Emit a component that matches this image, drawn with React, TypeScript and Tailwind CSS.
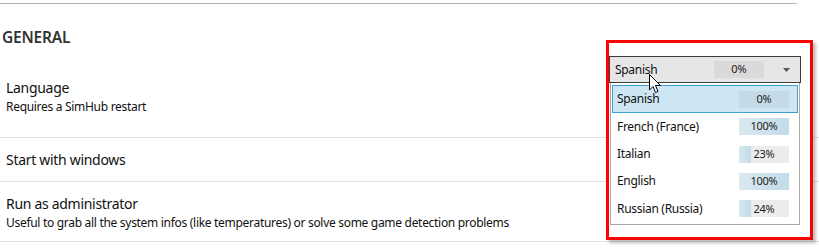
import React from "react";

const items = [
  { name: "Spanish", pct: 0, selected: true },
  { name: "French (France)", pct: 100 },
  { name: "Italian", pct: 23 },
  { name: "English", pct: 100 },
  { name: "Russian (Russia)", pct: 24 },
];

function PctBar({ pct, selected }: { pct: number; selected?: boolean }) {
  return (
    <div
      className={
        "relative w-[50px] h-[17px] flex items-center justify-center text-[11px] text-[#222] " +
        (selected ? "bg-[#c4dae6]" : "bg-[#ececec]")
      }
    >
      {!selected && (
        <div
          className="absolute left-0 top-0 h-full bg-gradient-to-r from-[#d9e9f1] to-[#c3dbe8]"
          style={{ width: `${pct}%` }}
        />
      )}
      <span className="relative">{pct}%</span>
    </div>
  );
}

function Cursor() {
  return (
    <svg width="13" height="20" viewBox="0 0 13 20" className="absolute left-[649px] top-[74px]">
      <path
        d="M0.5 0.5 L0.5 16 L4 12.5 L6.5 18.5 L9 17.5 L6.5 11.5 L11.5 11.5 Z"
        fill="#fff"
        stroke="#000"
        strokeWidth="1"
        strokeLinejoin="miter"
      />
    </svg>
  );
}

export default function App() {
  return (
    <div
      className="relative w-[819px] h-[249px] overflow-hidden bg-white text-[#111]"
      style={{ fontFamily: '"Noto Sans", "Open Sans", sans-serif' }}
    >
      <div className="pt-[3px]">
        <div className="w-[797px] h-px bg-[#b4b4b4]" />
      </div>
      <div className="pl-[2px] pt-[23px] text-[15.5px] leading-[20px] font-semibold text-[#333] tracking-[-0.2px]">
        GENERAL
      </div>
      <div className="pl-[6px] pt-[31px] h-[91px] flex flex-col border-b border-[#e3e3e3]">
        <div className="text-[14px] leading-[20px] tracking-[-0.3px]">Language</div>
        <div className="text-[12px] leading-[16px] tracking-[-0.3px] mt-[1px]">Requires a SimHub restart</div>
      </div>
      <div className="pl-[6px] h-[44px] flex items-center border-b border-[#e3e3e3]">
        <div className="text-[14px] leading-[20px] tracking-[-0.3px]">Start with windows</div>
      </div>
      <div className="pl-[6px] pt-[12px] h-[60px] flex flex-col gap-[1px] border-b border-[#e3e3e3]">
        <div className="text-[14px] leading-[20px] tracking-[-0.3px]">Run as administrator</div>
        <div className="text-[12px] leading-[16px] tracking-[-0.3px]">
          Useful to grab all the system infos (like temperatures) or solve some game detection problems
        </div>
      </div>

      {/* annotation overlay with dropdown */}
      <div className="absolute left-[606px] top-[40px] w-[207px] h-[200px] border-[3px] border-[#ff0000] bg-white shadow-[3px_3px_3px_rgba(0,0,0,0.25)]">
        <div className="pt-[13px] flex flex-col">
          <div className="w-[192px] h-[27px] border border-[#3c3c3c] bg-[#e6e6e6] flex items-center text-[12px]">
            <span className="pl-[5px] w-[104px] tracking-[-0.3px]">Spanish</span>
            <div className="w-[50px] h-[17px] bg-[#dadada] flex items-center justify-center text-[11px] text-[#222]">0%</div>
            <svg width="7" height="4" viewBox="0 0 7 4" className="ml-[19px]">
              <path d="M0 0 L7 0 L3.5 4 Z" fill="#555" />
            </svg>
          </div>
          <div className="ml-[1px] w-[190px] border border-[#a9a9a0] border-t-0 bg-white px-[1px] pt-[2px] pb-[1px] flex flex-col">
            {items.map((it) => (
              <div
                key={it.name}
                className={
                  "flex items-center justify-between pl-[4px] pr-[8px] text-[12px] tracking-[-0.3px] " +
                  (it.selected ? "h-[28px] border border-[#3d9fd6] bg-[#cce6f4]" : "h-[27.4px] border border-transparent")
                }
              >
                <span>{it.name}</span>
                <PctBar pct={it.pct} selected={it.selected} />
              </div>
            ))}
          </div>
        </div>
      </div>
      <Cursor />
    </div>
  );
}
